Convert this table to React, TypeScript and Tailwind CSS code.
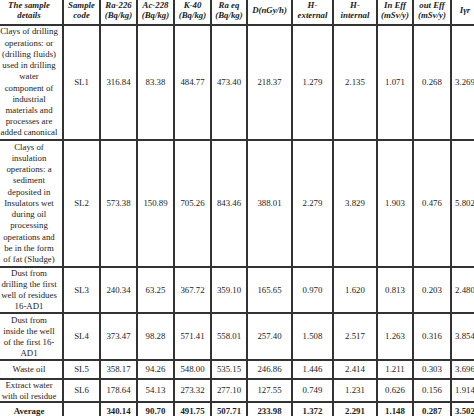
import React from 'react';

const headers: string[][] = [
  ['The sample', 'details'],
  ['Sample', 'code'],
  ['Ra-226', '(Bq/kg)'],
  ['Ac-228', '(Bq/kg)'],
  ['K-40', '(Bq/kg)'],
  ['Ra eq', '(Bq/kg)'],
  ['D(nGy/h)'],
  ['H-', 'external'],
  ['H-', 'internal'],
  ['In Eff', '(mSv/y)'],
  ['out Eff', '(mSv/y)'],
  ['Iγr'],
];

const colWidths = [68, 37, 37, 37, 37, 36, 45, 41, 44, 36, 38, 28];

const rows = [
  {
    h: 'h-[115px] leading-[11.2px]',
    details: ['Clays of drilling', 'operations: or', '(drilling fluids)', 'used in drilling', 'water', 'component of', 'industrial', 'materials and', 'processes are', 'added canonical'],
    values: ['SL1', '316.84', '83.38', '484.77', '473.40', '218.37', '1.279', '2.135', '1.071', '0.268', '3.269'],
  },
  {
    h: 'h-[127px] leading-[11.2px]',
    details: ['Clays of', 'insulation', 'operations: a', 'sediment', 'deposited in', 'Insulators wet', 'during oil', 'processing', 'operations and', 'be in the form', 'of fat (Sludge)'],
    values: ['SL2', '573.38', '150.89', '705.26', '843.46', '388.01', '2.279', '3.829', '1.903', '0.476', '5.802'],
  },
  {
    h: 'h-[46px] leading-[10.8px]',
    details: ['Dust from', 'drilling the first', 'well of residues', '16-AD1'],
    values: ['SL3', '240.34', '63.25', '367.72', '359.10', '165.65', '0.970', '1.620', '0.813', '0.203', '2.480'],
  },
  {
    h: 'h-[47px] leading-[11px]',
    details: ['Dust from', 'inside the well', 'of the first 16-', 'AD1'],
    values: ['SL4', '373.47', '98.28', '571.41', '558.01', '257.40', '1.508', '2.517', '1.263', '0.316', '3.854'],
  },
  {
    h: 'h-[19px] leading-[11px]',
    details: ['Waste oil'],
    values: ['SL5', '358.17', '94.26', '548.00', '535.15', '246.86', '1.446', '2.414', '1.211', '0.303', '3.696'],
  },
  {
    h: 'h-[23px] leading-[10.2px]',
    details: ['Extract water', 'with oil residue'],
    values: ['SL6', '178.64', '54.13', '273.32', '277.10', '127.55', '0.749', '1.231', '0.626', '0.156', '1.914'],
  },
];

const average = ['', '340.14', '90.70', '491.75', '507.71', '233.98', '1.372', '2.291', '1.148', '0.287', '3.502'];

const cell = 'border-2 border-[#333] p-0 text-center align-middle whitespace-nowrap';

function Lines({ lines }: { lines: string[] }) {
  return (
    <>
      {lines.map((l, i) => (
        <React.Fragment key={i}>
          {i > 0 && <br />}
          {l}
        </React.Fragment>
      ))}
    </>
  );
}

export default function App() {
  return (
    <div className="w-[474px] h-[416px] overflow-hidden bg-white font-['Liberation_Serif',serif] text-[#1c1c1c] text-[8.8px] leading-[11.2px]">
      <table className="table-fixed border-collapse w-[484px] ml-[-6px] mt-[-6px]">
        <colgroup>
          {colWidths.map((w, i) => (
            <col key={i} style={{ width: w }} />
          ))}
        </colgroup>
        <thead>
          <tr className="h-[30px]">
            {headers.map((h, i) => (
              <th key={i} className={`${cell} font-bold italic leading-[9.8px] pt-[1px]`}>
                <Lines lines={h} />
              </th>
            ))}
          </tr>
        </thead>
        <tbody>
          {rows.map((r) => (
            <tr key={r.values[0]} className={r.h}>
              <td className={cell}>
                <Lines lines={r.details} />
              </td>
              {r.values.map((v, i) => (
                <td key={i} className={cell}>
                  {v}
                </td>
              ))}
            </tr>
          ))}
          <tr className="h-[22px] font-bold">
            <td className={`${cell} align-top pt-[3px]`}>Average</td>
            {average.map((v, i) => (
              <td key={i} className={`${cell} align-top pt-[3px]`}>
                {v}
              </td>
            ))}
          </tr>
        </tbody>
      </table>
    </div>
  );
}
